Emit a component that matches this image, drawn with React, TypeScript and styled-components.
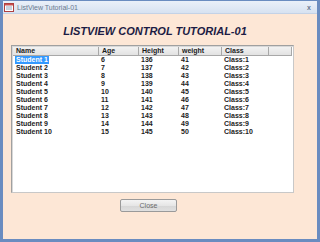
import styled, { createGlobalStyle } from 'styled-components';

const GlobalStyle = createGlobalStyle`
  html, body {
    margin: 0;
    padding: 0;
    width: 320px;
    height: 242px;
    overflow: hidden;
    background: #ffffff;
  }
`;

type IStudent = {
  name: string;
  age: number;
  height: number;
  weight: number;
  cls: string;
};

const students: IStudent[] = Array.from({ length: 10 }, (_, i) => ({
  name: `Student ${i + 1}`,
  age: 6 + i,
  height: 136 + i,
  weight: 41 + i,
  cls: `Class:${i + 1}`,
}));

const columns = [
  { title: 'Name', width: 86 },
  { title: 'Age', width: 40 },
  { title: 'Height', width: 40 },
  { title: 'weight', width: 43 },
  { title: 'Class', width: 47 },
];

const App = () => {
  return (
    <>
      <GlobalStyle />
      <StyledWindow>
        <StyledTitleBar>
          <FormIcon />
          <StyledTitleText>ListView Tutorial-01</StyledTitleText>
          <StyledCloseX>x</StyledCloseX>
        </StyledTitleBar>
        <StyledBody>
          <StyledHeading>LISTVIEW CONTROL TUTORIAL-01</StyledHeading>
          <StyledListView>
            <StyledHeaderRow>
              {columns.map((c) => (
                <StyledHeaderCell key={c.title} $width={c.width}>
                  {c.title}
                </StyledHeaderCell>
              ))}
              <StyledHeaderFiller />
            </StyledHeaderRow>
            {students.map((s, i) => (
              <StyledRow key={s.name}>
                <StyledCell $width={columns[0].width}>
                  <StyledCellText $selected={i === 0}>{s.name}</StyledCellText>
                </StyledCell>
                <StyledCell $width={columns[1].width}>{s.age}</StyledCell>
                <StyledCell $width={columns[2].width}>{s.height}</StyledCell>
                <StyledCell $width={columns[3].width}>{s.weight}</StyledCell>
                <StyledCell $width={columns[4].width}>{s.cls}</StyledCell>
              </StyledRow>
            ))}
          </StyledListView>
          <StyledButtonRow>
            <StyledButton>Close</StyledButton>
          </StyledButtonRow>
        </StyledBody>
      </StyledWindow>
    </>
  );
};

const FormIcon = () => (
  <svg width='10' height='9' viewBox='0 0 10 9'>
    <rect x='0.5' y='0.5' width='9' height='8' fill='#fff' stroke='#b04040' />
    <rect x='1' y='1' width='8' height='1.5' fill='#c85050' />
    <line x1='2' y1='4' x2='8' y2='4' stroke='#7a8fb0' strokeWidth='0.8' />
    <line x1='2' y1='6' x2='8' y2='6' stroke='#7a8fb0' strokeWidth='0.8' />
  </svg>
);

const StyledWindow = styled.div`
  box-sizing: border-box;
  width: 320px;
  height: 242px;
  display: flex;
  flex-direction: column;
  border: 3px solid #6a8cc0;
  border-top: 1px solid #6a8cc0;
  background: #fde7d6;
  font-family: 'Liberation Sans', Arial, sans-serif;
`;

const StyledTitleBar = styled.div`
  height: 12px;
  display: flex;
  align-items: center;
  gap: 3px;
  padding: 0 6px 0 1px;
  background: linear-gradient(#eaf0f9, #d7e2f1);
  border-bottom: 1px solid #c4d2e6;
`;

const StyledTitleText = styled.span`
  flex: 1;
  font-size: 7px;
  color: #6a7a90;
`;

const StyledCloseX = styled.span`
  font-size: 7px;
  color: #6a7a90;
  font-weight: bold;
`;

const StyledBody = styled.div`
  flex: 1;
  display: flex;
  flex-direction: column;
  padding: 0 0 0 8px;
`;

const StyledHeading = styled.div`
  height: 31px;
  line-height: 34px;
  padding-right: 18px;
  text-align: center;
  font-size: 11px;
  font-weight: bold;
  font-style: italic;
  color: #1c1c44;
`;

const StyledListView = styled.div`
  box-sizing: border-box;
  width: 283px;
  height: 148px;
  background: #ffffff;
  border: 1px solid #a0a0a0;
  border-right-color: #c8c8c8;
  border-bottom-color: #c8c8c8;
  box-shadow: inset 1px 1px 0 #d8d8d8;
  padding: 1px;
  font-size: 7px;
  font-weight: bold;
  color: #1c1c1c;
  font-family: 'Liberation Sans', Arial, sans-serif;
`;

const StyledHeaderRow = styled.div`
  display: flex;
  height: 9px;
  margin-bottom: 0;
`;

const StyledHeaderCell = styled.div<{ $width: number }>`
  box-sizing: border-box;
  width: ${(p) => p.$width}px;
  height: 9px;
  line-height: 8px;
  padding-left: 3px;
  background: linear-gradient(#f2f2f2, #e2e2e2);
  border-right: 1px solid #a8a8a8;
  border-bottom: 1px solid #a8a8a8;
`;

const StyledHeaderFiller = styled.div`
  flex: 1;
  height: 9px;
  box-sizing: border-box;
  background: linear-gradient(#f2f2f2, #e2e2e2);
  border-right: 1px solid #a8a8a8;
  border-bottom: 1px solid #a8a8a8;
`;

const StyledRow = styled.div`
  display: flex;
  height: 8px;
  line-height: 8px;
`;

const StyledCell = styled.div<{ $width: number }>`
  width: ${(p) => p.$width}px;
  padding-left: 2px;
  box-sizing: border-box;
  white-space: nowrap;
`;

const StyledCellText = styled.span<{ $selected: boolean }>`
  display: inline-block;
  padding: 0 1px;
  background: ${(p) => (p.$selected ? '#3399ff' : 'transparent')};
  color: ${(p) => (p.$selected ? '#ffffff' : 'inherit')};
`;

const StyledButtonRow = styled.div`
  width: 283px;
  display: flex;
  justify-content: center;
  padding-top: 6px;
`;

const StyledButton = styled.button`
  box-sizing: border-box;
  width: 57px;
  height: 13px;
  margin-right: 8px;
  padding: 0;
  border: 1px solid #9a9a9a;
  border-radius: 2px;
  background: linear-gradient(#f4f4f4 0%, #e6e6e6 50%, #d6d6d6 51%, #e0e0e0 100%);
  color: #6a6a6a;
  font-family: 'Liberation Sans', Arial, sans-serif;
  font-size: 7px;
`;

export default App;
